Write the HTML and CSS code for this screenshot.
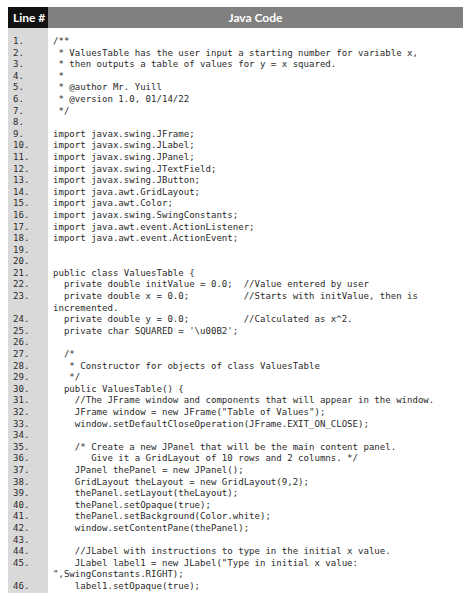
FILE: index.html
```html
<!DOCTYPE html>
<html>
<head>
<meta charset="utf-8">
<link rel="stylesheet" href="styles.css">
</head>
<body>
<div class="listing">
  <div class="head head-num">Line #</div>
  <div class="head head-code">Java Code</div>

  <div class="num first">1.</div><div class="code first">/**</div>
  <div class="num">2.</div><div class="code"> * ValuesTable has the user input a starting number for variable x,</div>
  <div class="num">3.</div><div class="code"> * then outputs a table of values for y = x squared.</div>
  <div class="num">4.</div><div class="code"> *</div>
  <div class="num">5.</div><div class="code"> * @author Mr. Yuill</div>
  <div class="num">6.</div><div class="code"> * @version 1.0, 01/14/22</div>
  <div class="num">7.</div><div class="code"> */</div>
  <div class="num">8.</div><div class="code"> </div>
  <div class="num">9.</div><div class="code">import javax.swing.JFrame;</div>
  <div class="num">10.</div><div class="code">import javax.swing.JLabel;</div>
  <div class="num">11.</div><div class="code">import javax.swing.JPanel;</div>
  <div class="num">12.</div><div class="code">import javax.swing.JTextField;</div>
  <div class="num">13.</div><div class="code">import javax.swing.JButton;</div>
  <div class="num">14.</div><div class="code">import java.awt.GridLayout;</div>
  <div class="num">15.</div><div class="code">import java.awt.Color;</div>
  <div class="num">16.</div><div class="code">import javax.swing.SwingConstants;</div>
  <div class="num">17.</div><div class="code">import java.awt.event.ActionListener;</div>
  <div class="num">18.</div><div class="code">import java.awt.event.ActionEvent;</div>
  <div class="num">19.</div><div class="code"> </div>
  <div class="num">20.</div><div class="code"> </div>
  <div class="num">21.</div><div class="code">public class ValuesTable {</div>
  <div class="num">22.</div><div class="code">  private double initValue = 0.0;  //Value entered by user</div>
  <div class="num">23.</div><div class="code">  private double x = 0.0;          //Starts with initValue, then is
incremented.</div>
  <div class="num">24.</div><div class="code">  private double y = 0.0;          //Calculated as x^2.</div>
  <div class="num">25.</div><div class="code">  private char SQUARED = '\u00B2';</div>
  <div class="num">26.</div><div class="code"> </div>
  <div class="num">27.</div><div class="code">  /*</div>
  <div class="num">28.</div><div class="code">   * Constructor for objects of class ValuesTable</div>
  <div class="num">29.</div><div class="code">   */</div>
  <div class="num">30.</div><div class="code">  public ValuesTable() {</div>
  <div class="num">31.</div><div class="code">    //The JFrame window and components that will appear in the window.</div>
  <div class="num">32.</div><div class="code">    JFrame window = new JFrame("Table of Values");</div>
  <div class="num">33.</div><div class="code">    window.setDefaultCloseOperation(JFrame.EXIT_ON_CLOSE);</div>
  <div class="num">34.</div><div class="code"> </div>
  <div class="num">35.</div><div class="code">    /* Create a new JPanel that will be the main content panel.</div>
  <div class="num">36.</div><div class="code">       Give it a GridLayout of 10 rows and 2 columns. */</div>
  <div class="num">37.</div><div class="code">    JPanel thePanel = new JPanel();</div>
  <div class="num">38.</div><div class="code">    GridLayout theLayout = new GridLayout(9,2);</div>
  <div class="num">39.</div><div class="code">    thePanel.setLayout(theLayout);</div>
  <div class="num">40.</div><div class="code">    thePanel.setOpaque(true);</div>
  <div class="num">41.</div><div class="code">    thePanel.setBackground(Color.white);</div>
  <div class="num">42.</div><div class="code">    window.setContentPane(thePanel);</div>
  <div class="num">43.</div><div class="code"> </div>
  <div class="num">44.</div><div class="code">    //JLabel with instructions to type in the initial x value.</div>
  <div class="num">45.</div><div class="code">    JLabel label1 = new JLabel("Type in initial x value:
",SwingConstants.RIGHT);</div>
  <div class="num">46.</div><div class="code">    label1.setOpaque(true);</div>
</div>
</body>
</html>
```
FILE: styles.css
```css
html, body {
  margin: 0;
  padding: 0;
  background: #ffffff;
}

.listing {
  margin: 7px 0 0 8px;
  width: 455px;
  display: grid;
  grid-template-columns: 40px 1fr;
}

.head {
  height: 21px;
  line-height: 21px;
  font-family: Lato, "Open Sans", sans-serif;
  font-weight: bold;
  font-size: 12px;
  color: #ffffff;
}

.head-num {
  background: #111111;
  padding-left: 5px;
}

.head-code {
  background: #808080;
  text-align: center;
}

.num, .code {
  font-family: "DejaVu Sans Mono", monospace;
  font-size: 9.05px;
  line-height: 11.6px;
  color: #2a2a2a;
  white-space: pre;
}

.num {
  background: #d9d9d9;
  padding-left: 5px;
}

.code {
  padding-left: 5px;
}

.first {
  padding-top: 8px;
}
```
